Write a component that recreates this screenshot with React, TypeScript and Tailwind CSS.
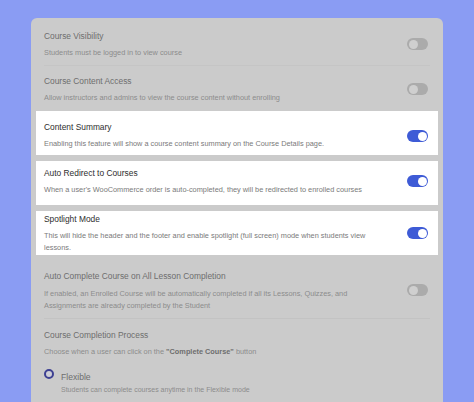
import React from "react";

type Setting = {
  title: string;
  desc: string;
  on: boolean;
  active: boolean;
  box: string;
  toggleTop: string;
  descGap: string;
};

const settings: Setting[] = [
  {
    title: "Course Visibility",
    desc: "Students must be logged in to view course",
    on: false,
    active: false,
    box: "pt-[12px] pb-[6px]",
    toggleTop: "mt-[20px]",
    descGap: "mt-[5px]",
  },
  {
    title: "Course Content Access",
    desc: "Allow instructors and admins to view the course content without enrolling",
    on: false,
    active: false,
    box: "pt-[9px] pb-[7px]",
    toggleTop: "mt-[17px]",
    descGap: "mt-[5px]",
  },
  {
    title: "Content Summary",
    desc: "Enabling this feature will show a course content summary on the Course Details page.",
    on: true,
    active: true,
    box: "pt-[10px] pb-[5px]",
    toggleTop: "mt-[19px]",
    descGap: "mt-[5px]",
  },
  {
    title: "Auto Redirect to Courses",
    desc: "When a user's WooCommerce order is auto-completed, they will be redirected to enrolled courses",
    on: true,
    active: true,
    box: "pt-[6px] pb-[9px]",
    toggleTop: "mt-[14px]",
    descGap: "mt-[5px]",
  },
  {
    title: "Spotlight Mode",
    desc: "This will hide the header and the footer and enable spotlight (full screen) mode when students view lessons.",
    on: true,
    active: true,
    box: "pt-[2px] pb-[1px]",
    toggleTop: "mt-[16px]",
    descGap: "mt-[5px]",
  },
  {
    title: "Auto Complete Course on All Lesson Completion",
    desc: "If enabled, an Enrolled Course will be automatically completed if all its Lessons, Quizzes, and Assignments are already completed by the Student",
    on: false,
    active: false,
    box: "pt-[15px] pb-[6px]",
    toggleTop: "mt-[29px]",
    descGap: "mt-[6px]",
  },
];

function Toggle({ on }: { on: boolean }) {
  return (
    <div
      className={`flex h-[12px] w-[21px] shrink-0 items-center rounded-full px-[1.5px] ${
        on ? "justify-end bg-[#3e5bd6]" : "justify-start bg-[#ababab]"
      }`}
    >
      <div
        className={`h-[9px] w-[9px] rounded-full ${
          on ? "bg-white" : "bg-[#cfcfcf]"
        }`}
      />
    </div>
  );
}

export default function App() {
  return (
    <div
      className="h-[402px] overflow-hidden bg-[#8a9cf3] px-[31px] pt-[18px]"
      style={{ fontFamily: '"Liberation Sans", Arial, sans-serif' }}
    >
      <div className="flex flex-col rounded-t-[6px] bg-[#cbcbcb] pb-10">
        {settings.map((s, i) => (
          <React.Fragment key={s.title}>
            {i === 1 ? <div className="mx-[13px] border-t border-[#c5c5c5]" /> : null}
            {i === 3 || i === 4 ? <div className="h-[6px]" /> : null}
            <div
              className={`flex items-start justify-between ${
                s.active
                  ? "mx-[5px] bg-white pl-[8px] pr-[10px]"
                  : "pl-[13px] pr-[15px]"
              }`}
            >
              <div className={`w-[330px] ${s.box}`}>
                <div
                  className={`text-[8.4px] leading-[12px] ${
                    s.active ? "text-[#2e2e2e]" : "text-[#6e6e6e]"
                  }`}
                >
                  {s.title}
                </div>
                <div
                  className={`${s.descGap} text-[7.35px] leading-[12px] ${
                    s.active ? "text-[#7a7a7a]" : "text-[#8b8b8b]"
                  }`}
                >
                  {s.desc}
                </div>
              </div>
              <div className={s.toggleTop}>
                <Toggle on={s.on} />
              </div>
            </div>
          </React.Fragment>
        ))}

        <div className="mx-[13px] border-t border-[#c3c3c3]" />

        {/* completion process */}
        <div className="px-[13px] pt-[10px]">
          <div className="text-[8.4px] leading-[12px] text-[#6e6e6e]">
            Course Completion Process
          </div>
          <div className="mt-[5px] text-[7.35px] leading-[12px] text-[#8b8b8b]">
            Choose when a user can click on the{" "}
            <span className="font-bold text-[#6e6e6e]">"Complete Course"</span>{" "}
            button
          </div>
          <div className="mt-[13px] flex items-start gap-[7px]">
            <div className="mt-[-2px] h-[10px] w-[10px] shrink-0 rounded-full border-[2px] border-[#3d4092] bg-[#cfcfd6]" />
            <div>
              <div className="text-[8.6px] leading-[12px] text-[#6e6e6e]">
                Flexible
              </div>
              <div className="mt-[1px] text-[7px] leading-[12px] text-[#8b8b8b]">
                Students can complete courses anytime in the Flexible mode
              </div>
            </div>
          </div>
        </div>
      </div>
    </div>
  );
}
